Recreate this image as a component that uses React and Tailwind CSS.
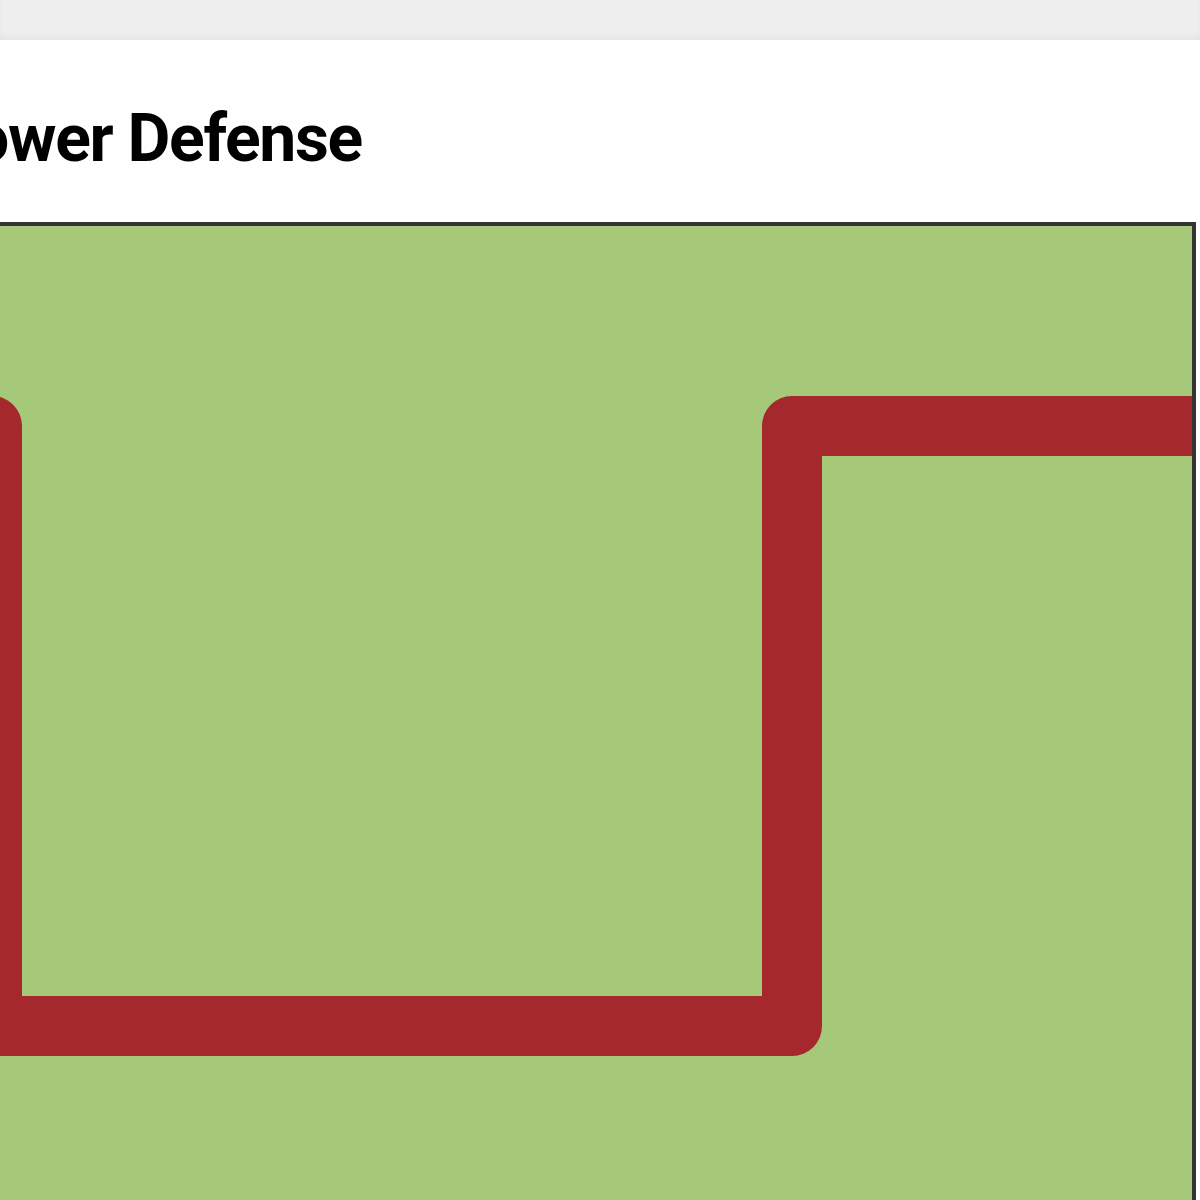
import React from 'react';

// path through the map, in canvas coordinates
const pathPoints = [
  [33, 200],
  [33, 800],
  [833, 800],
  [833, 200],
  [1400, 200],
];

const GameMap = () => {
  const d = pathPoints.map(([x, y], i) => `${i === 0 ? 'M' : 'L'}${x} ${y}`).join(' ');
  return (
    <div className="w-[1241px] h-[1000px] border-4 border-[#333333] bg-[#a5c879] overflow-hidden">
      <svg width="1233" height="992" className="block">
        <path d={d} fill="none" stroke="#a5292c" strokeWidth="60" strokeLinejoin="round" strokeLinecap="round" />
      </svg>
    </div>
  );
};

export default function App() {
  return (
    <div className="h-[1200px] overflow-hidden bg-white font-['Roboto',_'Liberation_Sans',_sans-serif]">
      <div className="h-10 bg-[#eeeeee] shadow-[inset_0_-4px_4px_rgba(0,0,0,0.035)]" />
      <div className="-ml-[45px] pt-[66px]">
        <h1 className="-ml-[17px] text-[66px] leading-none font-bold tracking-[-1.3px] text-black whitespace-nowrap mb-[50px]">Tower Defense</h1>
        <GameMap />
      </div>
    </div>
  );
}
